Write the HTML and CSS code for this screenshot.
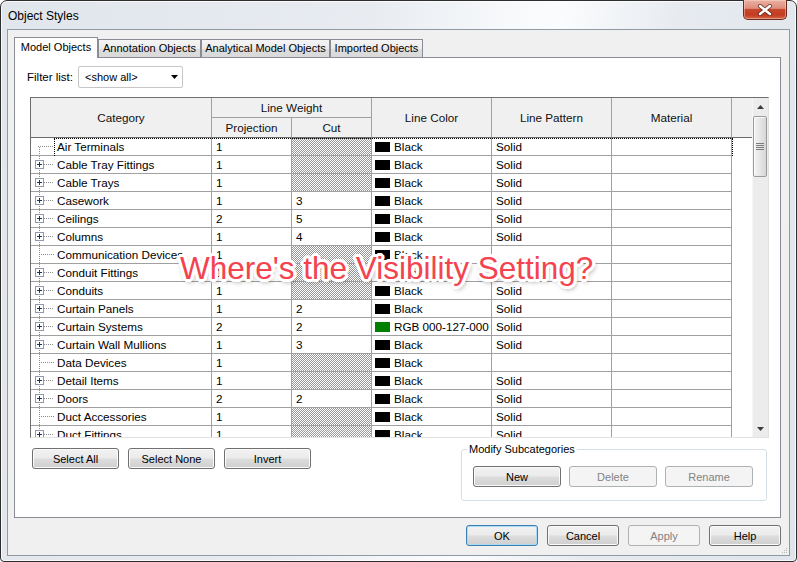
FILE: index.html
```html
<!DOCTYPE html>
<html>
<head>
<meta charset="utf-8">
<title>Object Styles</title>
<link rel="stylesheet" href="styles.css">
</head>
<body>
<svg class="defs" width="0" height="0" aria-hidden="true">
  <defs>
    <symbol id="tr-plus" viewBox="0 0 25 17">
      <path d="M8.5 0V17M13 8.5H23" stroke="#8c8c8c" stroke-dasharray="1 1" fill="none" shape-rendering="crispEdges"/>
      <rect x="4.5" y="4.5" width="8" height="8" fill="#fff" stroke="#8f99aa" shape-rendering="crispEdges"/>
      <path d="M6 8.5H11M8.5 6V11" stroke="#1c2f66" fill="none" shape-rendering="crispEdges"/>
    </symbol>
    <symbol id="tr-leaf" viewBox="0 0 25 17">
      <path d="M8.5 0V17M10 8.5H23" stroke="#8c8c8c" stroke-dasharray="1 1" fill="none" shape-rendering="crispEdges"/>
    </symbol>
    <symbol id="tr-first" viewBox="0 0 25 17">
      <path d="M8.5 9V17M7 8.5H23" stroke="#8c8c8c" stroke-dasharray="1 1" fill="none" shape-rendering="crispEdges"/>
    </symbol>
  </defs>
</svg>
<div class="window">
  <div class="titlebar">
    <span class="title">Object Styles</span>
    <div class="close">
      <svg width="16" height="12" viewBox="0 0 16 12">
        <path d="M3 2L13 10M13 2L3 10" stroke="#5b2218" stroke-width="4.2" stroke-linecap="round" fill="none" opacity="0.75"/>
        <path d="M3 2L13 10M13 2L3 10" stroke="#ffffff" stroke-width="2.4" stroke-linecap="round" fill="none"/>
      </svg>
    </div>
  </div>
  <div class="client">
    <div class="tabs">
      <div class="tab active t1">Model Objects</div>
      <div class="tab t2">Annotation Objects</div>
      <div class="tab t3">Analytical Model Objects</div>
      <div class="tab t4">Imported Objects</div>
    </div>
    <div class="panel">
      <div class="filter">
        <span class="flabel">Filter list:</span>
        <div class="combo">
          <span>&lt;show all&gt;</span>
          <svg width="7" height="4" viewBox="0 0 7 4"><path d="M0 0H7L3.5 4Z" fill="#000"/></svg>
        </div>
      </div>
      <div class="grid">
        <div class="gmain">
          <div class="ghead">
            <div class="h h-cat">Category</div>
            <div class="h h-lw">Line Weight</div>
            <div class="h h-proj">Projection</div>
            <div class="h h-cut">Cut</div>
            <div class="h h-color">Line Color</div>
            <div class="h h-pat">Line Pattern</div>
            <div class="h h-mat">Material</div>
            <div class="h h-fill"></div>
          </div>
          <div class="gbody">
            <div class="rows">
              <div class="row focus">
                <div class="c cat"><svg class="tree"><use href="#tr-first"/></svg><span class="name">Air Terminals</span></div>
                <div class="c">1</div><div class="c hatch"></div>
                <div class="c"><i class="sw"></i>Black</div><div class="c">Solid</div><div class="c"></div>
              </div>
              <div class="row">
                <div class="c cat"><svg class="tree"><use href="#tr-plus"/></svg><span class="name">Cable Tray Fittings</span></div>
                <div class="c">1</div><div class="c hatch"></div>
                <div class="c"><i class="sw"></i>Black</div><div class="c">Solid</div><div class="c"></div>
              </div>
              <div class="row">
                <div class="c cat"><svg class="tree"><use href="#tr-plus"/></svg><span class="name">Cable Trays</span></div>
                <div class="c">1</div><div class="c hatch"></div>
                <div class="c"><i class="sw"></i>Black</div><div class="c">Solid</div><div class="c"></div>
              </div>
              <div class="row">
                <div class="c cat"><svg class="tree"><use href="#tr-plus"/></svg><span class="name">Casework</span></div>
                <div class="c">1</div><div class="c">3</div>
                <div class="c"><i class="sw"></i>Black</div><div class="c">Solid</div><div class="c"></div>
              </div>
              <div class="row">
                <div class="c cat"><svg class="tree"><use href="#tr-plus"/></svg><span class="name">Ceilings</span></div>
                <div class="c">2</div><div class="c">5</div>
                <div class="c"><i class="sw"></i>Black</div><div class="c">Solid</div><div class="c"></div>
              </div>
              <div class="row">
                <div class="c cat"><svg class="tree"><use href="#tr-plus"/></svg><span class="name">Columns</span></div>
                <div class="c">1</div><div class="c">4</div>
                <div class="c"><i class="sw"></i>Black</div><div class="c">Solid</div><div class="c"></div>
              </div>
              <div class="row">
                <div class="c cat"><svg class="tree"><use href="#tr-leaf"/></svg><span class="name">Communication Devices</span></div>
                <div class="c">1</div><div class="c hatch"></div>
                <div class="c"><i class="sw"></i>Black</div><div class="c"></div><div class="c"></div>
              </div>
              <div class="row">
                <div class="c cat"><svg class="tree"><use href="#tr-plus"/></svg><span class="name">Conduit Fittings</span></div>
                <div class="c">1</div><div class="c hatch"></div>
                <div class="c"><i class="sw"></i>Black</div><div class="c">Solid</div><div class="c"></div>
              </div>
              <div class="row">
                <div class="c cat"><svg class="tree"><use href="#tr-plus"/></svg><span class="name">Conduits</span></div>
                <div class="c">1</div><div class="c hatch"></div>
                <div class="c"><i class="sw"></i>Black</div><div class="c">Solid</div><div class="c"></div>
              </div>
              <div class="row">
                <div class="c cat"><svg class="tree"><use href="#tr-plus"/></svg><span class="name">Curtain Panels</span></div>
                <div class="c">1</div><div class="c">2</div>
                <div class="c"><i class="sw"></i>Black</div><div class="c">Solid</div><div class="c"></div>
              </div>
              <div class="row">
                <div class="c cat"><svg class="tree"><use href="#tr-plus"/></svg><span class="name">Curtain Systems</span></div>
                <div class="c">2</div><div class="c">2</div>
                <div class="c"><i class="sw sw-green"></i>RGB 000-127-000</div><div class="c">Solid</div><div class="c"></div>
              </div>
              <div class="row">
                <div class="c cat"><svg class="tree"><use href="#tr-plus"/></svg><span class="name">Curtain Wall Mullions</span></div>
                <div class="c">1</div><div class="c">3</div>
                <div class="c"><i class="sw"></i>Black</div><div class="c">Solid</div><div class="c"></div>
              </div>
              <div class="row">
                <div class="c cat"><svg class="tree"><use href="#tr-leaf"/></svg><span class="name">Data Devices</span></div>
                <div class="c">1</div><div class="c hatch"></div>
                <div class="c"><i class="sw"></i>Black</div><div class="c"></div><div class="c"></div>
              </div>
              <div class="row">
                <div class="c cat"><svg class="tree"><use href="#tr-plus"/></svg><span class="name">Detail Items</span></div>
                <div class="c">1</div><div class="c hatch"></div>
                <div class="c"><i class="sw"></i>Black</div><div class="c">Solid</div><div class="c"></div>
              </div>
              <div class="row">
                <div class="c cat"><svg class="tree"><use href="#tr-plus"/></svg><span class="name">Doors</span></div>
                <div class="c">2</div><div class="c">2</div>
                <div class="c"><i class="sw"></i>Black</div><div class="c">Solid</div><div class="c"></div>
              </div>
              <div class="row">
                <div class="c cat"><svg class="tree"><use href="#tr-leaf"/></svg><span class="name">Duct Accessories</span></div>
                <div class="c">1</div><div class="c hatch"></div>
                <div class="c"><i class="sw"></i>Black</div><div class="c">Solid</div><div class="c"></div>
              </div>
              <div class="row">
                <div class="c cat"><svg class="tree"><use href="#tr-plus"/></svg><span class="name">Duct Fittings</span></div>
                <div class="c">1</div><div class="c hatch"></div>
                <div class="c"><i class="sw"></i>Black</div><div class="c">Solid</div><div class="c"></div>
              </div>
            </div>
            <div class="gfill"></div>
          </div>
        </div>
        <div class="vscroll">
          <div class="sbtn"><svg width="7" height="4" viewBox="0 0 7 4"><path d="M3.5 0L7 4H0Z" fill="#3c3c3c"/></svg></div>
          <div class="thumb">
            <svg width="8" height="7" viewBox="0 0 8 7">
              <path d="M0 0.5H8M0 2.5H8M0 4.5H8M0 6.5H8" stroke="#7d7d7d" shape-rendering="crispEdges"/>
            </svg>
          </div>
          <div class="strack"></div>
          <div class="sbtn"><svg width="7" height="4" viewBox="0 0 7 4"><path d="M0 0H7L3.5 4Z" fill="#3c3c3c"/></svg></div>
        </div>
      </div>
      <div class="below">
        <div class="selbtns">
          <button class="btn">Select All</button>
          <button class="btn">Select None</button>
          <button class="btn">Invert</button>
        </div>
        <fieldset class="group">
          <legend>Modify Subcategories</legend>
          <button class="btn btn-sub">New</button>
          <button class="btn btn-sub disabled">Delete</button>
          <button class="btn btn-sub disabled">Rename</button>
        </fieldset>
      </div>
    </div>
    <div class="dlgbtns">
      <button class="btn btn-dlg default">OK</button>
      <button class="btn btn-dlg">Cancel</button>
      <button class="btn btn-dlg disabled">Apply</button>
      <button class="btn btn-dlg">Help</button>
    </div>
    <svg class="grip" width="7" height="7" viewBox="0 0 7 7">
      <g fill="#b8b8b8"><rect x="5" y="1" width="1" height="1"/><rect x="3" y="3" width="1" height="1"/><rect x="5" y="3" width="1" height="1"/><rect x="1" y="5" width="1" height="1"/><rect x="3" y="5" width="1" height="1"/><rect x="5" y="5" width="1" height="1"/></g>
    </svg>
  </div>
  <div class="overlay">Where's the Visibility Setting?</div>
</div>
</body>
</html>
```

FILE: styles.css
```css
* { box-sizing: border-box; }
html, body { margin: 0; padding: 0; }
body {
  width: 797px;
  height: 562px;
  overflow: hidden;
  background: #ffffff;
  font-family: "Liberation Sans", Arial, sans-serif;
  font-size: 11px;
  color: #000;
}
.defs { position: absolute; width: 0; height: 0; overflow: hidden; }

.window {
  position: relative;
  width: 797px;
  height: 562px;
  border: 1px solid #2e2e2e;
  border-radius: 7px 7px 4px 4px;
  background: linear-gradient(100deg, #e1e6ec 0%, #e8ecf1 42%, #f6f8fa 56%, #fbfcfd 63%, #e7ebf0 76%, #dfe5eb 100%);
  box-shadow: inset 0 0 0 1px rgba(255, 255, 255, 0.75);
  display: flex;
  flex-direction: column;
}

.titlebar {
  height: 28px;
  flex: none;
  display: flex;
  align-items: center;
  padding-left: 7px;
}
.title { font-size: 12px; margin-top: 1px; color: #000; }
.close {
  margin-left: auto;
  margin-right: 9px;
  margin-top: -1px;
  align-self: flex-start;
  width: 44px;
  height: 20px;
  border: 1px solid #6a2a1e;
  border-top: none;
  border-radius: 0 0 5px 5px;
  background: linear-gradient(#eab1a3 0%, #df8d7a 44%, #c9472c 50%, #c23c22 78%, #d66545 100%);
  box-shadow: inset 0 0 0 1px rgba(255, 220, 210, 0.45);
  display: flex;
  align-items: center;
  justify-content: center;
}

.client {
  position: relative;
  flex: 1;
  margin: 0 6px 5px;
  border: 1px solid #8f9aa5;
  background: #f0f0f0;
  padding: 7px 8px 9px 6px;
  display: flex;
  flex-direction: column;
}

.tabs {
  display: flex;
  align-items: flex-end;
  height: 20px;
  flex: none;
}
.tab {
  height: 18px;
  border: 1px solid #898c95;
  border-bottom: none;
  background: linear-gradient(#f5f5f5 0%, #ebebeb 50%, #dedede 51%, #d9d9d9 100%);
  text-align: center;
  line-height: 17px;
  font-size: 11px;
  white-space: nowrap;
}
.tab.active {
  height: 21px;
  margin-bottom: -1px;
  background: #ffffff;
  position: relative;
  z-index: 1;
  line-height: 19px;
}
.t1 { width: 84px; }
.t2 { width: 103px; }
.t3 { width: 129px; }
.t4 { width: 93px; }

.panel {
  height: 461px;
  flex: none;
  border: 1px solid #898c95;
  background: #ffffff;
  padding: 8px 12px 16px 12px;
  display: flex;
  flex-direction: column;
}

.filter {
  display: flex;
  align-items: center;
  height: 22px;
}
.flabel { width: 51px; font-size: 11.5px; }
.combo {
  width: 105px;
  height: 22px;
  border: 1px solid #c6c6c6;
  border-radius: 2px;
  background: #ffffff;
  display: flex;
  align-items: center;
  justify-content: space-between;
  padding: 0 4px 0 6px;
  font-size: 11px;
}

.grid {
  margin: 9px 0 0 3px;
  width: 739px;
  height: 341px;
  flex: none;
  border: 1px solid;
  border-color: #6e6e6e #e2e2e2 #e2e2e2 #6e6e6e;
  display: flex;
}
.gmain {
  width: 721px;
  display: flex;
  flex-direction: column;
}
.ghead {
  display: grid;
  grid-template-columns: 181px 80px 80px 120px 120px 120px 20px;
  grid-template-rows: 20px 20px;
  background: #f0f0f0;
  font-size: 11.7px;
  flex: none;
}
.h {
  display: flex;
  align-items: center;
  justify-content: center;
  border-right: 1px solid #a0a0a0;
  border-bottom: 1px solid #6a6a6a;
  color: #111;
  white-space: nowrap;
}
.h-cat { grid-column: 1; grid-row: 1 / 3; }
.h-lw { grid-column: 2 / 4; grid-row: 1; border-bottom-color: #a0a0a0; }
.h-proj { grid-column: 2; grid-row: 2; }
.h-cut { grid-column: 3; grid-row: 2; }
.h-color { grid-column: 4; grid-row: 1 / 3; }
.h-pat { grid-column: 5; grid-row: 1 / 3; }
.h-mat { grid-column: 6; grid-row: 1 / 3; }
.h-fill { grid-column: 7; grid-row: 1 / 3; border-right: none; }

.gbody {
  flex: 1;
  display: flex;
  overflow: hidden;
  background: #ffffff;
}
.rows { width: 701px; flex: none; }
.gfill { width: 20px; flex: none; }
.row {
  position: relative;
  display: grid;
  grid-template-columns: 181px 80px 80px 120px 120px 120px;
  height: 18px;
}
.row.focus::after {
  content: "";
  position: absolute;
  left: 23px;
  top: 0;
  width: 677px;
  height: 17px;
  border: 1px dotted #000;
  border-bottom: none;
  pointer-events: none;
}
.c {
  border-right: 1px solid #a0a0a0;
  border-bottom: 1px solid #a0a0a0;
  padding-left: 4px;
  padding-top: 1px;
  white-space: nowrap;
  overflow: hidden;
  display: flex;
  align-items: center;
  font-size: 11.7px;
  line-height: 16px;
}
.c.cat { padding-left: 0; padding-top: 0; }
.c.cat .name { padding-top: 1px; }
.tree { width: 25px; height: 17px; flex: none; }
.name { margin-left: 1px; }
.c.hatch {
  background: repeating-conic-gradient(#979797 0 25%, #ffffff 0 50%) 0 0 / 2px 2px;
}
.sw {
  width: 15px;
  height: 10px;
  background: #000;
  margin: 0 4px 0 -1px;
  flex: none;
}
.sw-green { background: #007f00; }

.vscroll {
  width: 16px;
  flex: none;
  background: #ececec;
  border-left: 1px solid #f6f6f6;
  display: flex;
  flex-direction: column;
}
.sbtn {
  height: 17px;
  flex: none;
  display: flex;
  align-items: center;
  justify-content: center;
}
.thumb {
  height: 61px;
  flex: none;
  margin: 1px 1px 0 0;
  border: 1px solid #9a9a9a;
  border-radius: 2px;
  background: linear-gradient(to right, #f3f3f3 0%, #e6e6e6 50%, #d6d6d6 100%);
  box-shadow: inset 1px 1px 0 #fbfbfb;
  display: flex;
  align-items: center;
  justify-content: center;
}
.strack { flex: 1; }

.below {
  display: flex;
  justify-content: space-between;
  align-items: flex-start;
  height: 63px;
  flex: none;
}
.selbtns {
  display: flex;
  gap: 9px;
  margin: 10px 0 0 5px;
}
.btn {
  width: 87px;
  height: 21px;
  padding: 0;
  margin: 0;
  font-family: "Liberation Sans", Arial, sans-serif;
  font-size: 11px;
  color: #000;
  border: 1px solid #707070;
  border-radius: 3px;
  background: linear-gradient(#f2f2f2 0%, #ebebeb 48%, #dddddd 52%, #cfcfcf 100%);
  box-shadow: inset 0 0 0 1px #fbfbfb;
  text-align: center;
  flex: none;
}
.btn.disabled {
  color: #838383;
  border-color: #adb2b5;
  background: #f4f4f4;
  box-shadow: none;
}
.btn.default {
  border-color: #3c7fb1;
  box-shadow: inset 0 0 0 1px #a9dbf6;
}

.group {
  margin: 4px 1px 0 0;
  width: 306px;
  height: 59px;
  min-width: 0;
  border: 1px solid #d5dfe5;
  border-radius: 3px;
  padding: 10px 13px 12px 11px;
  display: flex;
  gap: 8px;
}
.group legend {
  font-size: 11px;
  line-height: 14px;
  padding: 0 2px;
  margin-left: -6px;
}
.btn-sub { width: 88px; }

.dlgbtns {
  display: flex;
  justify-content: flex-end;
  gap: 9px;
  margin-top: 7px;
  flex: none;
}
.btn-dlg { width: 72px; }

.grip {
  position: absolute;
  right: 1px;
  bottom: 1px;
}

.overlay {
  position: absolute;
  left: 179px;
  top: 249px;
  font-family: "Liberation Sans", Arial, sans-serif;
  font-size: 31.5px;
  line-height: 36px;
  color: #f4434f;
  white-space: nowrap;
  text-shadow:
    3px 0 0 #fff, -3px 0 0 #fff, 0 3px 0 #fff, 0 -3px 0 #fff,
    2px 2px 0 #fff, -2px 2px 0 #fff, 2px -2px 0 #fff, -2px -2px 0 #fff,
    3px 1px 0 #fff, 3px -1px 0 #fff, -3px 1px 0 #fff, -3px -1px 0 #fff,
    1px 3px 0 #fff, -1px 3px 0 #fff, 1px -3px 0 #fff, -1px -3px 0 #fff,
    2px 3px 5px rgba(0, 0, 0, 0.45), -1px 1px 5px rgba(0, 0, 0, 0.25);
}
```
